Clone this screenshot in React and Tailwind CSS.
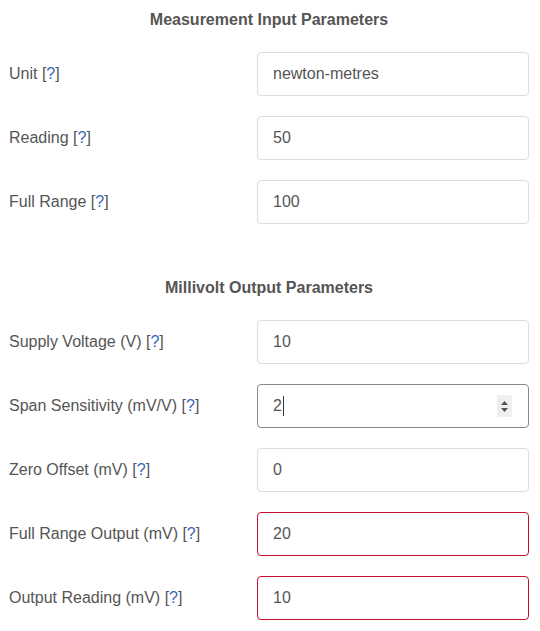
import { useState } from 'react'

const inputSection = [
  { label: 'Unit', value: 'newton-metres', type: 'text' },
  { label: 'Reading', value: '50' },
  { label: 'Full Range', value: '100' },
]

const outputSection = [
  { label: 'Supply Voltage (V)', value: '10' },
  { label: 'Span Sensitivity (mV/V)', value: '2', focused: true },
  { label: 'Zero Offset (mV)', value: '0' },
  { label: 'Full Range Output (mV)', value: '20', invalid: true },
  { label: 'Output Reading (mV)', value: '10', invalid: true },
]

function Row({ label, value, focused, invalid }) {
  let border = 'border-[#dddddd]'
  if (focused) border = 'border-[#8a8a8a]'
  if (invalid) border = 'border-[#c8102e]'
  return (
    <div className="flex items-center h-[64px]">
      <label className="w-[248px] text-[16px] text-[#555555]">
        {label} <span>[<a href="#" className="text-[#3366bb]">?</a>]</span>
      </label>
      <div className={`relative w-[272px] h-[44px] border ${border} rounded-[4px] bg-white flex items-center px-[15px]`}>
        <span className="text-[16px] text-[#555555]">{value}</span>
        {focused && <span className="w-px h-[20px] bg-[#333] ml-[1px]" />}
        {focused && (
          <div className="absolute right-[16px] top-[10px] w-[15px] h-[22px] bg-[#efefef] flex flex-col items-center justify-center gap-[3px]">
            <svg width="7" height="4" viewBox="0 0 7 4"><path d="M0 4 L3.5 0 L7 4 Z" fill="#555" /></svg>
            <svg width="7" height="4" viewBox="0 0 7 4"><path d="M0 0 L3.5 4 L7 0 Z" fill="#555" /></svg>
          </div>
        )}
      </div>
    </div>
  )
}

export default function App() {
  const [, setX] = useState(0)
  return (
    <div className="w-[540px] bg-white pl-[9px] pr-[11px] font-['Liberation_Sans',Arial,sans-serif]" onClick={() => setX(1)}>
      <h2 className="text-center font-bold text-[16px] text-[#555555] pt-[8px] h-[42px]">Measurement Input Parameters</h2>
      {inputSection.map(r => <Row key={r.label} {...r} />)}
      <h2 className="text-center font-bold text-[16px] text-[#555555] pt-[42px] h-[76px]">Millivolt Output Parameters</h2>
      {outputSection.map(r => <Row key={r.label} {...r} />)}
    </div>
  )
}
